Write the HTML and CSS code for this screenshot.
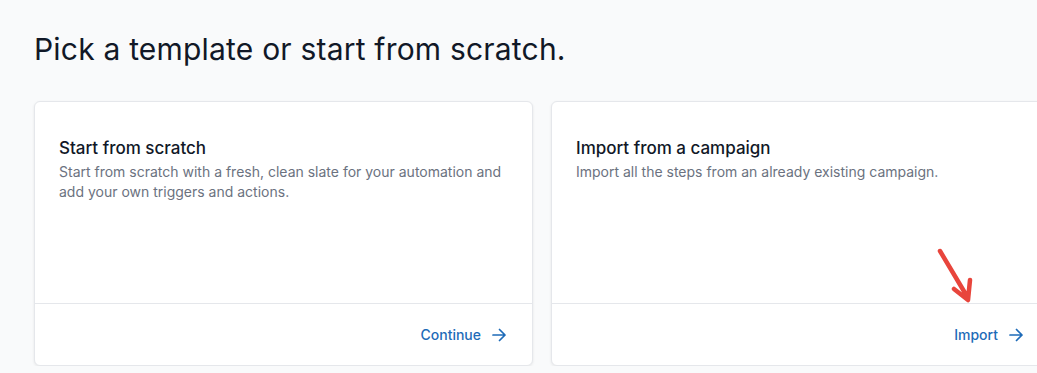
FILE: index.html
```html
<!DOCTYPE html>
<html lang="en">
<head>
    <meta charset="UTF-8">
    <meta name="viewport" content="width=device-width, initial-scale=1.0">
    <title>New Automation</title>
    <link rel="stylesheet" href="styles.css">
</head>

<body>
    <div class="page">
        <h1 class="page-title">Pick a template or start from scratch.</h1>

        <!-- Template cards -->
        <div class="cards">
            <div class="card">
                <div class="card-body">
                    <h2 class="card-title">Start from scratch</h2>
                    <p class="card-text">Start from scratch with a fresh, clean slate for your automation and add your own triggers and actions.</p>
                </div>
                <div class="card-footer">
                    <a href="#" class="card-link">Continue
                        <svg class="arrow" width="16" height="16" viewBox="0 0 16 16" fill="none" stroke="currentColor" stroke-width="1.7" stroke-linecap="round" stroke-linejoin="round"><path d="M2 8h12M8.5 2.5L14 8l-5.5 5.5"/></svg>
                    </a>
                </div>
            </div>

            <div class="card">
                <div class="card-body">
                    <h2 class="card-title">Import from a campaign</h2>
                    <p class="card-text">Import all the steps from an already existing campaign.</p>
                </div>
                <div class="card-footer">
                    <a href="#" class="card-link">Import
                        <svg class="arrow" width="16" height="16" viewBox="0 0 16 16" fill="none" stroke="currentColor" stroke-width="1.7" stroke-linecap="round" stroke-linejoin="round"><path d="M2 8h12M8.5 2.5L14 8l-5.5 5.5"/></svg>
                    </a>
                </div>
                <!-- annotation arrow -->
                <svg class="annotation" width="50" height="70" viewBox="0 0 50 70" fill="none" stroke="#e8453c" stroke-width="4.5" stroke-linecap="round" stroke-linejoin="round"><path d="M9 10L37 57M23 48l14 11 2-20"/></svg>
            </div>
        </div>
    </div>
</body>
</html>
```

FILE: styles.css
```css
body {
    font-family: Inter, "Noto Sans", sans-serif;
    background-color: #f9fafb;
    color: #111827;
    margin: 0;
    padding: 0;
}
.page {
    padding: 29px 0 0 34px;
}
.page-title {
    font-size: 30px;
    font-weight: 400;
    letter-spacing: 0.2px;
    line-height: 40px;
    margin: 0 0 32px 0;
    color: #111827;
}
.cards {
    display: flex;
    gap: 18px;
    width: 1016px;
}
.card {
    position: relative;
    flex: 0 0 499px;
    height: 265px;
    background-color: #fff;
    border: 1px solid #e5e7eb;
    border-radius: 6px;
    box-shadow: 0 1px 3px rgba(0, 0, 0, 0.08);
    display: flex;
    flex-direction: column;
    box-sizing: border-box;
}
.card-body {
    flex: 1;
    padding: 34px 24px 0 24px;
}
.card-title {
    font-size: 17px;
    font-weight: 500;
    line-height: 24px;
    margin: 0;
    color: #111827;
}
.card-text {
    font-size: 14px;
    line-height: 20px;
    color: #6b7280;
    margin: 2px 0 0 0;
}
.card-footer {
    height: 61px;
    border-top: 1px solid #e5e7eb;
    display: flex;
    justify-content: flex-end;
    align-items: center;
    padding: 0 25px;
}
.card-link {
    display: flex;
    align-items: center;
    gap: 10px;
    font-size: 14px;
    font-weight: 500;
    color: #1e6bb8;
    text-decoration: none;
}
.annotation {
    position: absolute;
    left: 379px;
    top: 139px;
}
```
